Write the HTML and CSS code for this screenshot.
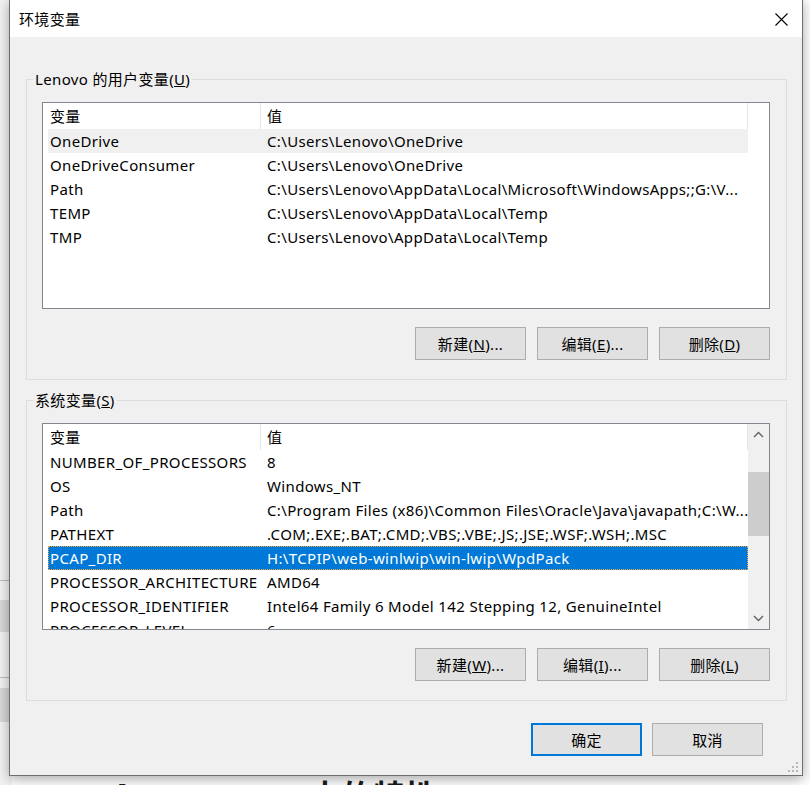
FILE: index.html
```html
<!DOCTYPE html>
<html lang="zh-CN">
<head>
<meta charset="utf-8">
<title>环境变量</title>
<link rel="stylesheet" href="styles.css">
</head>
<body>
<div class="desktop">
  <div class="bg-left">
    <div class="bg-line l1"></div>
    <div class="bg-band b1"></div>
    <div class="bg-line l2"></div>
    <div class="bg-band b2"></div>
  </div>
  <div class="bg-text"><span class="bt1">4</span><span class="bt2">中的特性</span></div>

  <div class="dialog">
    <div class="titlebar">
      <span class="title">环境变量</span>
      <svg class="close" width="13" height="13" viewBox="0 0 13 13"><path d="M0.5 0.5 L12.5 12.5 M12.5 0.5 L0.5 12.5" stroke="#000" stroke-width="1.1" fill="none"/></svg>
    </div>

    <div class="content">
      <fieldset class="group">
        <legend>Lenovo 的用户变量(<u>U</u>)</legend>
        <div class="group-body">
          <div class="list">
            <div class="list-main">
              <div class="list-head"><div class="c1">变量</div><div class="c2">值</div></div>
              <div class="row hover"><div class="c1">OneDrive</div><div class="c2">C:\Users\Lenovo\OneDrive</div></div>
              <div class="row"><div class="c1">OneDriveConsumer</div><div class="c2">C:\Users\Lenovo\OneDrive</div></div>
              <div class="row"><div class="c1">Path</div><div class="c2">C:\Users\Lenovo\AppData\Local\Microsoft\WindowsApps;;G:\V...</div></div>
              <div class="row"><div class="c1">TEMP</div><div class="c2">C:\Users\Lenovo\AppData\Local\Temp</div></div>
              <div class="row"><div class="c1">TMP</div><div class="c2">C:\Users\Lenovo\AppData\Local\Temp</div></div>
            </div>
          </div>
          <div class="btn-row">
            <button class="btn">新建(<u>N</u>)...</button>
            <button class="btn">编辑(<u>E</u>)...</button>
            <button class="btn">删除(<u>D</u>)</button>
          </div>
        </div>
      </fieldset>

      <fieldset class="group second">
        <legend>系统变量(<u>S</u>)</legend>
        <div class="group-body">
          <div class="list">
            <div class="list-main">
              <div class="list-head"><div class="c1">变量</div><div class="c2">值</div></div>
              <div class="row"><div class="c1">NUMBER_OF_PROCESSORS</div><div class="c2">8</div></div>
              <div class="row"><div class="c1">OS</div><div class="c2">Windows_NT</div></div>
              <div class="row"><div class="c1">Path</div><div class="c2">C:\Program Files (x86)\Common Files\Oracle\Java\javapath;C:\W...</div></div>
              <div class="row"><div class="c1">PATHEXT</div><div class="c2">.COM;.EXE;.BAT;.CMD;.VBS;.VBE;.JS;.JSE;.WSF;.WSH;.MSC</div></div>
              <div class="row selected"><div class="c1">PCAP_DIR</div><div class="c2">H:\TCPIP\web-winlwip\win-lwip\WpdPack</div></div>
              <div class="row"><div class="c1">PROCESSOR_ARCHITECTURE</div><div class="c2">AMD64</div></div>
              <div class="row"><div class="c1">PROCESSOR_IDENTIFIER</div><div class="c2">Intel64 Family 6 Model 142 Stepping 12, GenuineIntel</div></div>
              <div class="row"><div class="c1">PROCESSOR_LEVEL</div><div class="c2">6</div></div>
            </div>
            <div class="scrollbar">
              <div class="sb-arrow">
                <svg width="11" height="7" viewBox="0 0 11 7"><path d="M1 6 L5.5 1.5 L10 6" stroke="#606060" stroke-width="1.4" fill="none"/></svg>
              </div>
              <div class="sb-track"><div class="sb-thumb"></div></div>
              <div class="sb-arrow">
                <svg width="11" height="7" viewBox="0 0 11 7"><path d="M1 1 L5.5 5.5 L10 1" stroke="#606060" stroke-width="1.4" fill="none"/></svg>
              </div>
            </div>
          </div>
          <div class="btn-row">
            <button class="btn">新建(<u>W</u>)...</button>
            <button class="btn">编辑(<u>I</u>)...</button>
            <button class="btn">删除(<u>L</u>)</button>
          </div>
        </div>
      </fieldset>

      <div class="footer">
        <button class="btn default">确定</button>
        <button class="btn">取消</button>
      </div>
    </div>

    <svg class="grip" width="10" height="10" viewBox="0 0 10 10">
      <rect x="8" y="0" width="2" height="2" fill="#b8b8b8"/>
      <rect x="4" y="4" width="2" height="2" fill="#b8b8b8"/>
      <rect x="8" y="4" width="2" height="2" fill="#b8b8b8"/>
      <rect x="0" y="8" width="2" height="2" fill="#b8b8b8"/>
      <rect x="4" y="8" width="2" height="2" fill="#b8b8b8"/>
      <rect x="8" y="8" width="2" height="2" fill="#b8b8b8"/>
    </svg>
  </div>
</div>
</body>
</html>
```

FILE: styles.css
```css
* { box-sizing: border-box; }
html, body { margin: 0; padding: 0; }
body {
  width: 810px;
  height: 785px;
  overflow: hidden;
  background: #ffffff;
  font-family: "Noto Sans", "Noto Sans CJK SC", sans-serif;
  font-size: 15px;
  letter-spacing: 0.35px;
  color: #000;
}
.desktop {
  position: relative;
  width: 810px;
  height: 785px;
  overflow: hidden;
  background: #ffffff;
}

/* things behind the dialog */
.bg-left {
  position: absolute;
  left: 0;
  top: 0;
  width: 12px;
  height: 785px;
  background: #f3f3f3;
}
.bg-line { position: absolute; left: 0; width: 12px; height: 1px; background: #bdbdbd; }
.bg-line.l1 { top: 580px; }
.bg-line.l2 { top: 677px; }
.bg-band { position: absolute; left: 0; width: 12px; background: #d9d9d9; }
.bg-band.b1 { top: 600px; height: 32px; }
.bg-band.b2 { top: 688px; height: 34px; }
.bg-text {
  position: absolute;
  left: 110px;
  top: 774px;
  font-family: "Noto Sans CJK SC", sans-serif;
  font-size: 32px;
  font-weight: bold;
  line-height: 40px;
  letter-spacing: 0;
  color: #1a1a1a;
  white-space: nowrap;
}
.bt2 { margin-left: 180px; }

/* dialog window */
.dialog {
  position: absolute;
  left: 9px;
  top: -1px;
  width: 794px;
  height: 777px;
  border: 1px solid #6f6f6f;
  background: #f0f0f0;
  box-shadow: 0 3px 12px rgba(0, 0, 0, 0.35);
  display: flex;
  flex-direction: column;
}
.titlebar {
  height: 37px;
  flex: none;
  background: #ffffff;
  display: flex;
  align-items: center;
  padding-left: 9px;
  padding-right: 14px;
}
.title {
  font-size: 15px;
  line-height: 20px;
  margin-top: 1px;
}
.close { margin-left: auto; margin-top: 1px; }

.content {
  padding: 32px 15px 0 16px;
  display: flex;
  flex-direction: column;
}

.group {
  margin: 0;
  padding: 0;
  border: 1px solid #dcdcdc;
  min-width: 0;
}
.group.second { margin-top: 10px; }
.group legend {
  margin-left: 6px;
  padding: 0 2px;
  line-height: 21px;
  font-size: 15px;
}
.group-body {
  padding: 12px 16px 19px 15px;
}

.list {
  height: 207px;
  border: 1px solid #828790;
  background: #ffffff;
  display: flex;
  overflow: hidden;
}
.list-main {
  flex: 1;
  padding-left: 5px;
  overflow: hidden;
}
.list-head {
  display: flex;
  height: 26px;
  line-height: 26px;
}
.list-head .c1 {
  width: 213px;
  padding-left: 2px;
  border-right: 1px solid #e5e5e5;
}
.list-head .c2 {
  width: 487px;
  padding-left: 6px;
  border-right: 1px solid #e5e5e5;
}
.row {
  display: flex;
  width: 700px;
  height: 24px;
  line-height: 24px;
  white-space: nowrap;
}
.row .c1 {
  width: 213px;
  padding-left: 2px;
  overflow: hidden;
}
.row .c2 {
  width: 487px;
  padding-left: 6px;
  overflow: hidden;
}
.row.hover { background: #f0f0f0; }
.row.selected {
  background: #0078d7;
  color: #ffffff;
  outline: 1px dotted #f5a340;
  outline-offset: -1px;
}

.scrollbar {
  width: 21px;
  flex: none;
  background: #f0f0f0;
  display: flex;
  flex-direction: column;
}
.sb-arrow {
  height: 21px;
  flex: none;
  display: flex;
  align-items: center;
  justify-content: center;
}
.sb-track { flex: 1; }
.sb-thumb {
  margin-top: 27px;
  height: 64px;
  background: #cdcdcd;
}

.btn-row {
  display: flex;
  justify-content: flex-end;
  gap: 11px;
  margin-top: 18px;
}
.btn {
  width: 111px;
  height: 33px;
  border: 1px solid #adadad;
  background: #e1e1e1;
  font-family: "Noto Sans", "Noto Sans CJK SC", sans-serif;
  font-size: 15px;
  letter-spacing: 0.35px;
  color: #000;
  padding: 0;
  margin: 0;
}
.btn.default { border: 2px solid #0078d7; }

.footer {
  display: flex;
  justify-content: flex-end;
  gap: 10px;
  margin-top: 22px;
  padding-right: 24px;
}

.grip {
  position: absolute;
  right: 4px;
  bottom: 3px;
}
```
